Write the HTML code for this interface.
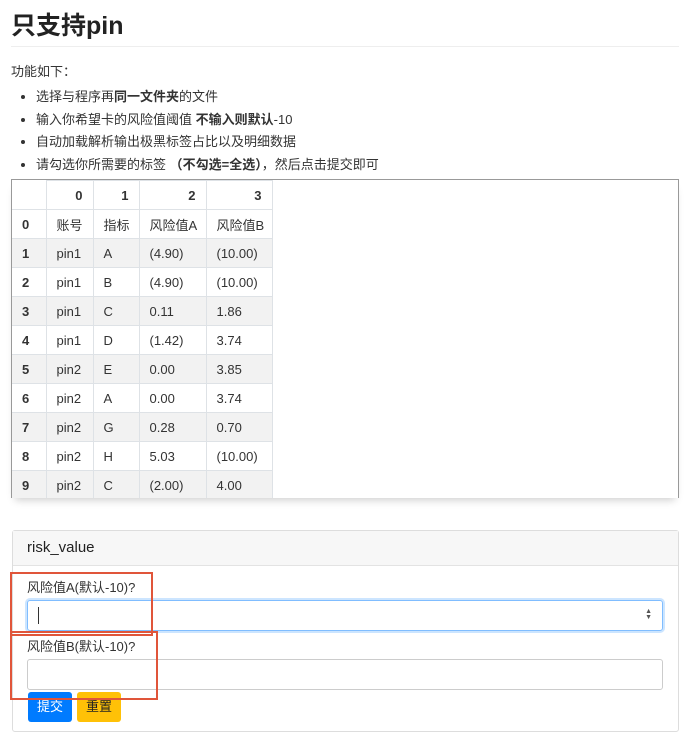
<!DOCTYPE html>
<html><head><meta charset="utf-8"><style>
body{margin:0;width:690px;height:727px;overflow:hidden;background:#fff;font-family:"Liberation Sans","Noto Sans CJK SC",sans-serif;color:#333;font-size:13px;position:relative}
.a{position:absolute}
h1{position:absolute;left:11px;top:6px;margin:0;font-size:25px;font-weight:bold;color:#222}
.hr{left:11px;top:46px;width:668px;height:1px;background:#eee}
ul{position:absolute;left:14px;top:86px;margin:0;padding-left:22px;line-height:22.5px}
.box{left:11px;top:179px;width:666px;height:318px;border:1px solid #999;border-bottom:none;overflow:hidden;box-shadow:0 6px 8px -4px rgba(0,0,0,.2)}
table{border-collapse:collapse;table-layout:fixed;width:260px}
td{border:1px solid #dee2e6;height:28px;padding:0 10px;font-size:13px;white-space:nowrap;overflow:hidden}
tr:nth-child(odd):not(:first-child) td{background:#f2f2f2}
td:first-child{font-weight:bold}
.card{left:12px;top:530px;width:665px;height:200px;border:1px solid #ddd;border-radius:3px}
.ch{height:34px;background:#f7f7f7;border-bottom:1px solid #e3e3e3;font-size:15px;line-height:34px;padding-left:14px;color:#222}
.in{left:27px;width:634px;height:29px;border:1px solid #ccc;border-radius:3px}
.red{border:2px solid #e0553a}
.btn{top:692px;width:44px;height:30px;border-radius:3px;line-height:30px;text-align:center;font-size:13px}
</style></head><body>
<h1>只支持pin</h1>
<div class="a hr"></div>
<div class="a" style="left:11px;top:61px">功能如下：</div>
<ul>
<li>选择与程序再<b>同一文件夹</b>的文件</li>
<li>输入你希望卡的风险值阈值 <b>不输入则默认</b>-10</li>
<li>自动加载解析输出极黑标签占比以及明细数据</li>
<li>请勾选你所需要的标签 <b>（不勾选=全选）</b>，然后点击提交即可</li>
</ul>
<div class="a box"><table>
<colgroup><col style="width:34px"><col style="width:47px"><col style="width:46px"><col style="width:67px"><col style="width:66px"></colgroup>
<tr><td style="border-left:none;border-top:none"></td><td style="text-align:right;font-weight:bold">0</td><td style="text-align:right;font-weight:bold">1</td><td style="text-align:right;font-weight:bold">2</td><td style="text-align:right;font-weight:bold">3</td></tr>
<tr><td style="border-left:none">0</td><td>账号</td><td>指标</td><td>风险值A</td><td>风险值B</td></tr>
<tr><td style="border-left:none">1</td><td>pin1</td><td>A</td><td>(4.90)</td><td>(10.00)</td></tr>
<tr><td style="border-left:none">2</td><td>pin1</td><td>B</td><td>(4.90)</td><td>(10.00)</td></tr>
<tr><td style="border-left:none">3</td><td>pin1</td><td>C</td><td>0.11</td><td>1.86</td></tr>
<tr><td style="border-left:none">4</td><td>pin1</td><td>D</td><td>(1.42)</td><td>3.74</td></tr>
<tr><td style="border-left:none">5</td><td>pin2</td><td>E</td><td>0.00</td><td>3.85</td></tr>
<tr><td style="border-left:none">6</td><td>pin2</td><td>A</td><td>0.00</td><td>3.74</td></tr>
<tr><td style="border-left:none">7</td><td>pin2</td><td>G</td><td>0.28</td><td>0.70</td></tr>
<tr><td style="border-left:none">8</td><td>pin2</td><td>H</td><td>5.03</td><td>(10.00)</td></tr>
<tr><td style="border-left:none">9</td><td>pin2</td><td>C</td><td>(2.00)</td><td>4.00</td></tr>
</table></div>
<div class="a card"><div class="ch">risk_value</div></div>
<div class="a" style="left:27px;top:577px">风险值A(默认-10)?</div>
<div class="a in" style="top:600px;border-color:#80bdff;box-shadow:0 0 0 2px rgba(0,123,255,.2)"><div class="a" style="left:10px;top:6px;width:1px;height:17px;background:#333"></div><div class="a" style="right:10px;top:8px;font-size:7px;line-height:6px;color:#555">▲<br>▼</div></div>
<div class="a" style="left:27px;top:636px">风险值B(默认-10)?</div>
<div class="a in" style="top:659px"></div>
<div class="a btn" style="left:28px;background:#007bff;color:#fff">提交</div>
<div class="a btn" style="left:77px;background:#ffc107;color:#222">重置</div>
<div class="a red" style="left:10px;top:572px;width:139px;height:60px"></div>
<div class="a red" style="left:10px;top:631px;width:144px;height:65px"></div>
</body></html>
